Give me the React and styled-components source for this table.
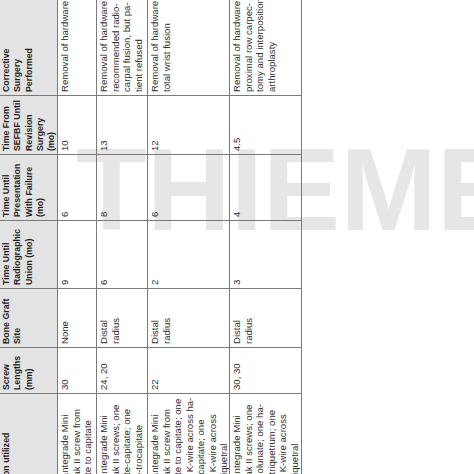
import React from "react";
import styled, { createGlobalStyle } from "styled-components";

const GlobalStyle = createGlobalStyle`
  html, body {
    margin: 0;
    padding: 0;
    background: #ffffff;
    overflow: hidden;
  }
`;

// columns in reading order of the original (unrotated) table
const columns = [
  { head: ["Fixation utilized"], width: 108 },
  { head: ["Screw", "Lengths", "(mm)"], width: 46 },
  { head: ["Bone Graft", "Site"], width: 59 },
  { head: ["Time Until", "Radiographic", "Union (mo)"], width: 68 },
  { head: ["Time Until", "Presentation", "With Failure", "(mo)"], width: 66 },
  { head: ["Time From", "SEFBF Until", "Revision", "Surgery", "(mo)"], width: 59 },
  { head: ["Corrective", "Surgery", "Performed"], width: 120 },
];

const rows = [
  {
    height: 39,
    cells: [
      ["One antegrade Mini", "Acutrak II screw from", "hamate to capitate"],
      ["30"],
      ["None"],
      ["9"],
      ["6"],
      ["10"],
      ["Removal of hardware"],
    ],
  },
  {
    height: 51,
    cells: [
      ["Two antegrade Mini", "Acutrak II screws; one", "hamate-capitate; one", "lunate-trocapitate"],
      ["24, 20"],
      ["Distal", "radius"],
      ["6"],
      ["8"],
      ["13"],
      ["Removal of hardware;", "recommended radio-", "carpal fusion, but pa-", "tient refused"],
    ],
  },
  {
    height: 82,
    cells: [
      [
        "One antegrade Mini",
        "Acutrak II screw from",
        "hamate to capitate; one",
        "and a K-wire across ha-",
        "mate-capitate; one",
        "and a K-wire across",
        "lunotriquetral",
      ],
      ["22"],
      ["Distal", "radius"],
      ["2"],
      ["6"],
      ["12"],
      ["Removal of hardware;", "total wrist fusion"],
    ],
  },
  {
    height: 73,
    last: true,
    cells: [
      [
        "Two antegrade Mini",
        "Acutrak II screws; one",
        "scapholunate; one ha-",
        "mate-triquetrum; one",
        "and a K-wire across",
        "lunotriquetral",
      ],
      ["30, 30"],
      ["Distal", "radius"],
      ["3"],
      ["4"],
      ["4.5"],
      ["Removal of hardware;", "proximal row carpec-", "tomy and interposition", "arthroplasty"],
    ],
  },
];

const totalWidth = columns.reduce((sum, c) => sum + c.width, 0);

export default function App() {
  return (
    <>
      <GlobalStyle />
      <Page>
        <Watermark>THIEME</Watermark>
        <Rotator>
          <Table
            $cols={columns.map((c) => `${c.width}px`).join(" ")}
            $rows={["57px", ...rows.map((r) => `${r.height}px`)].join(" ")}
          >
            {columns.map((col, i) => (
              <HeadCell key={`h${i}`} $first={i === 0}>
                {col.head.map((line, j) => (
                  <Line key={j}>{line}</Line>
                ))}
              </HeadCell>
            ))}
            {rows.map((row, r) =>
              row.cells.map((cell, i) => (
                <Cell key={`${r}-${i}`} $first={i === 0} $last={row.last}>
                  {cell.map((line, j) => (
                    <Line key={j}>{line}</Line>
                  ))}
                </Cell>
              ))
            )}
          </Table>
        </Rotator>
      </Page>
    </>
  );
}

const Page = styled.div`
  position: relative;
  width: 474px;
  height: 474px;
  overflow: hidden;
  background: #ffffff;
`;

const Watermark = styled.div`
  position: absolute;
  left: 76px;
  top: 132px;
  z-index: 0;
  font-family: "Liberation Sans", Arial, sans-serif;
  font-weight: 700;
  font-size: 116px;
  line-height: 1;
  color: #e6e6e6;
  white-space: nowrap;
  pointer-events: none;
`;

const Rotator = styled.div`
  position: relative;
  z-index: 1;
  width: ${totalWidth}px;
  transform-origin: 0 0;
  transform: translateY(502px) rotate(-90deg);
`;

const Table = styled.div`
  display: grid;
  grid-template-columns: ${(p) => p.$cols};
  grid-template-rows: ${(p) => p.$rows};
  font-family: "Liberation Sans", Arial, sans-serif;
`;

const Line = styled.span`
  display: block;
  white-space: nowrap;
`;

const HeadCell = styled.div`
  box-sizing: border-box;
  background: #e3e3e3;
  border-left: ${(p) => (p.$first ? "none" : "1px solid #7a7a7a")};
  padding: 1px 3px 0 3px;
  font-size: 8.8px;
  line-height: 11.3px;
  font-weight: 700;
  color: #1e1e1e;
  overflow: hidden;
`;

const Cell = styled.div`
  box-sizing: border-box;
  border-top: 1px solid #7a7a7a;
  border-bottom: ${(p) => (p.$last ? "1px solid #7a7a7a" : "none")};
  border-left: ${(p) => (p.$first ? "none" : "1px solid #7a7a7a")};
  padding: 1px 3px 0 3px;
  font-size: 9.6px;
  line-height: 11.5px;
  color: #2e2e2e;
  overflow: hidden;
`;
